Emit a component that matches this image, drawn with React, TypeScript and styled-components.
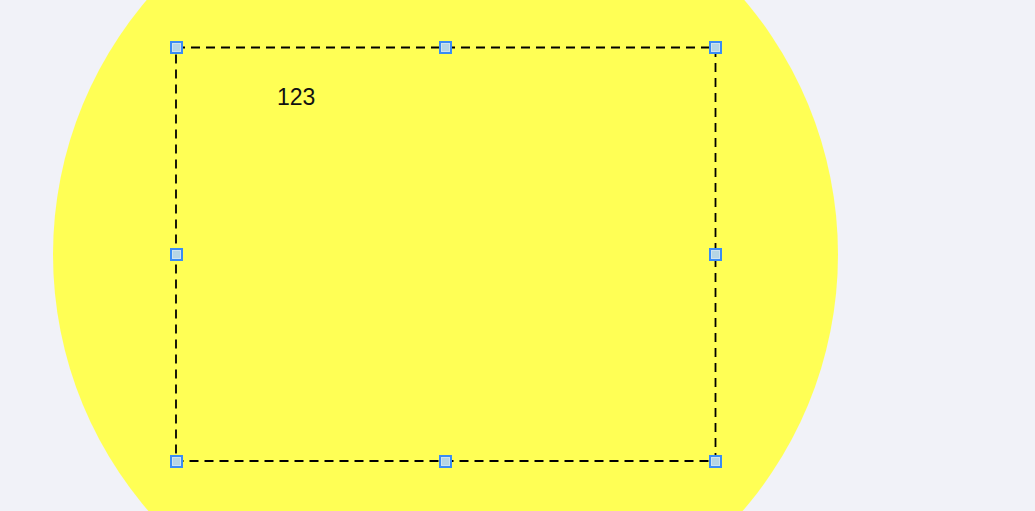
import styled, { createGlobalStyle } from 'styled-components';

const Global = createGlobalStyle`
  html, body {
    margin: 0;
    padding: 0;
    background: #f1f2f8;
    overflow: hidden;
  }
`

const Canvas = styled.div`
    position: relative;
    width: 1035px;
    height: 511px;
    overflow: hidden;
    background: #f1f2f8;
    font-family: "Liberation Sans", Arial, sans-serif;
`

const Ellipse = styled.div<{ cx: number; cy: number; r: number }>`
    position: absolute;
    left: ${p => p.cx - p.r}px;
    top: ${p => p.cy - p.r}px;
    width: ${p => p.r * 2}px;
    height: ${p => p.r * 2}px;
    border-radius: 50%;
    background: #ffff55;
`

const Label = styled.div`
    position: absolute;
    left: 277px;
    top: 84px;
    font-size: 23px;
    color: #111;
    line-height: 26px;
`

const Outline = styled.svg`
    position: absolute;
    left: 0;
    top: 0;
    overflow: visible;
    pointer-events: none;
`

const Handle = styled.div<{ x: number; y: number }>`
    position: absolute;
    left: ${p => p.x - 6.5}px;
    top: ${p => p.y - 6.5}px;
    width: 13px;
    height: 13px;
    box-sizing: border-box;
    border: 2px solid #3a8cf4;
    background: #b6d5e4;
    box-shadow: inset 0 0 0 1px #cfe3ee;
`

const box = { x1: 176, y1: 47.5, x2: 715.5, y2: 461 }

export default function App() {
    const mx = (box.x1 + box.x2) / 2
    const my = (box.y1 + box.y2) / 2
    const handles = [
        [box.x1, box.y1], [mx, box.y1], [box.x2, box.y1],
        [box.x1, my], [box.x2, my],
        [box.x1, box.y2], [mx, box.y2], [box.x2, box.y2],
    ]

    return (
        <Canvas>
            <Global />
            <Ellipse cx={445.5} cy={254} r={392.5} />
            <Label>123</Label>
            <Outline width={1035} height={511}>
                <rect
                    x={box.x1}
                    y={box.y1}
                    width={box.x2 - box.x1}
                    height={box.y2 - box.y1}
                    fill="none"
                    stroke="#000"
                    strokeWidth={1.8}
                    strokeDasharray="9 6"
                />
            </Outline>
            {handles.map(([x, y], i) => (
                <Handle key={i} x={x} y={y} />
            ))}
        </Canvas>
    )
}
